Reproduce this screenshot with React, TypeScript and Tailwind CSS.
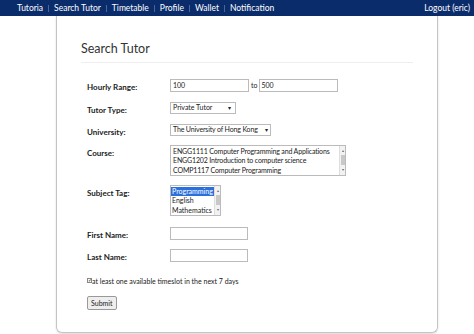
import * as React from 'react';

const navItems = ['Tutoria', 'Search Tutor', 'Timetable', 'Profile', 'Wallet', 'Notification'];

function Field({ label, children }: { label: string; children: React.ReactNode }) {
  return (
    <div className="flex items-start">
      <div className="w-[83px] shrink-0 pt-[2px] text-[8px] font-bold text-[#222]">{label}</div>
      <div className="flex items-center">{children}</div>
    </div>
  );
}

function Scrollbar() {
  return (
    <div className="w-[6px] shrink-0 bg-[#f2f2f2] border-l border-[#ddd] flex flex-col items-center justify-between text-[4px] text-[#666]">
      <span>▴</span>
      <div className="w-[4px] h-[10px] bg-[#c8c8c8]" />
      <span>▾</span>
    </div>
  );
}

export default function App() {
  return (
    <div className="w-[474px] h-[334px] bg-white overflow-hidden font-['Lato','Open_Sans',sans-serif] text-[#222]">
      <nav className="h-[16px] bg-[#0b2c6b] flex items-center justify-between pl-[17px] pr-[4px] text-[8.5px] text-white">
        <div className="flex items-center">
          {navItems.map((item, i) => (
            <React.Fragment key={item}>
              {i > 0 && <span className="mx-[5px] h-[7px] w-px bg-[#4a6599]" />}
              <span>{item}</span>
            </React.Fragment>
          ))}
        </div>
        <span>Logout (eric)</span>
      </nav>

      <div className="mx-[56px] w-[382px] h-[317px] border border-t-0 border-[#c4c4c4] rounded-b-[6px] shadow-[0_1px_2px_rgba(0,0,0,0.15)] px-[24px]">
        <h1 className="pt-[27px] text-[12.5px] text-[#333] leading-none">Search Tutor</h1>
        <div className="mt-[6px] h-px bg-[#eee]" />

        <div className="pl-[6px] pt-[16px] flex flex-col text-[7px]">
          <Field label="Hourly Range:">
            <input defaultValue="100" className="w-[79px] h-[13px] border border-[#bbb] px-[2px] text-[7px] outline-none" />
            <span className="mx-[2px]">to</span>
            <input defaultValue="500" className="w-[79px] h-[13px] border border-[#bbb] px-[1px] text-[7px] outline-none" />
          </Field>
          <div className="mt-[9px]">
            <Field label="Tutor Type:">
              <div className="w-[66px] h-[12px] border border-[#bbb] flex items-center justify-between px-[2px] whitespace-nowrap">
                <span>Private Tutor</span>
                <span className="text-[6px] pr-[2px]">▾</span>
              </div>
            </Field>
          </div>
          <div className="mt-[8px]">
            <Field label="University:">
              <div className="w-[101px] h-[12px] border border-[#bbb] flex items-center justify-between px-[2px] whitespace-nowrap tracking-[-0.15px]">
                <span>The University of Hong Kong</span>
                <span className="text-[6px]">▾</span>
              </div>
            </Field>
          </div>
          <div className="mt-[7px]">
            <Field label="Course:">
              <div className="w-[176px] h-[31px] border border-[#bbb] flex leading-[9.5px]">
                <div className="flex-1 px-[2px] pt-[1px] whitespace-nowrap overflow-hidden tracking-[-0.15px]">
                  <div>ENGG1111 Computer Programming and Applications</div>
                  <div>ENGG1202 Introduction to computer science</div>
                  <div>COMP1117 Computer Programming</div>
                </div>
                <Scrollbar />
              </div>
            </Field>
          </div>
          <div className="mt-[9px]">
            <Field label="Subject Tag:">
              <div className="w-[51px] h-[31px] border border-[#bbb] flex leading-[9.5px]">
                <div className="flex-1 pt-[1px] whitespace-nowrap overflow-hidden">
                  <div className="bg-[#2a6fdb] text-white px-[1px]">Programming</div>
                  <div className="px-[1px]">English</div>
                  <div className="px-[1px]">Mathematics</div>
                </div>
                <Scrollbar />
              </div>
            </Field>
          </div>
          <div className="mt-[11px]">
            <Field label="First Name:">
              <input className="w-[78px] h-[13px] border border-[#bbb] outline-none" />
            </Field>
          </div>
          <div className="mt-[8px]">
            <Field label="Last Name:">
              <input className="w-[78px] h-[13px] border border-[#bbb] outline-none" />
            </Field>
          </div>
          <div className="mt-[13px] flex items-center">
            <span className="w-[5px] h-[5px] border border-[#888] text-[5px] leading-none flex items-center justify-center">✓</span>
            <span>at least one available timeslot in the next 7 days</span>
          </div>
          <div className="mt-[10px]">
            <button className="h-[14px] px-[3px] border border-[#999] bg-[#eee] rounded-[2px] text-[7px] leading-none">Submit</button>
          </div>
        </div>
      </div>
    </div>
  );
}
